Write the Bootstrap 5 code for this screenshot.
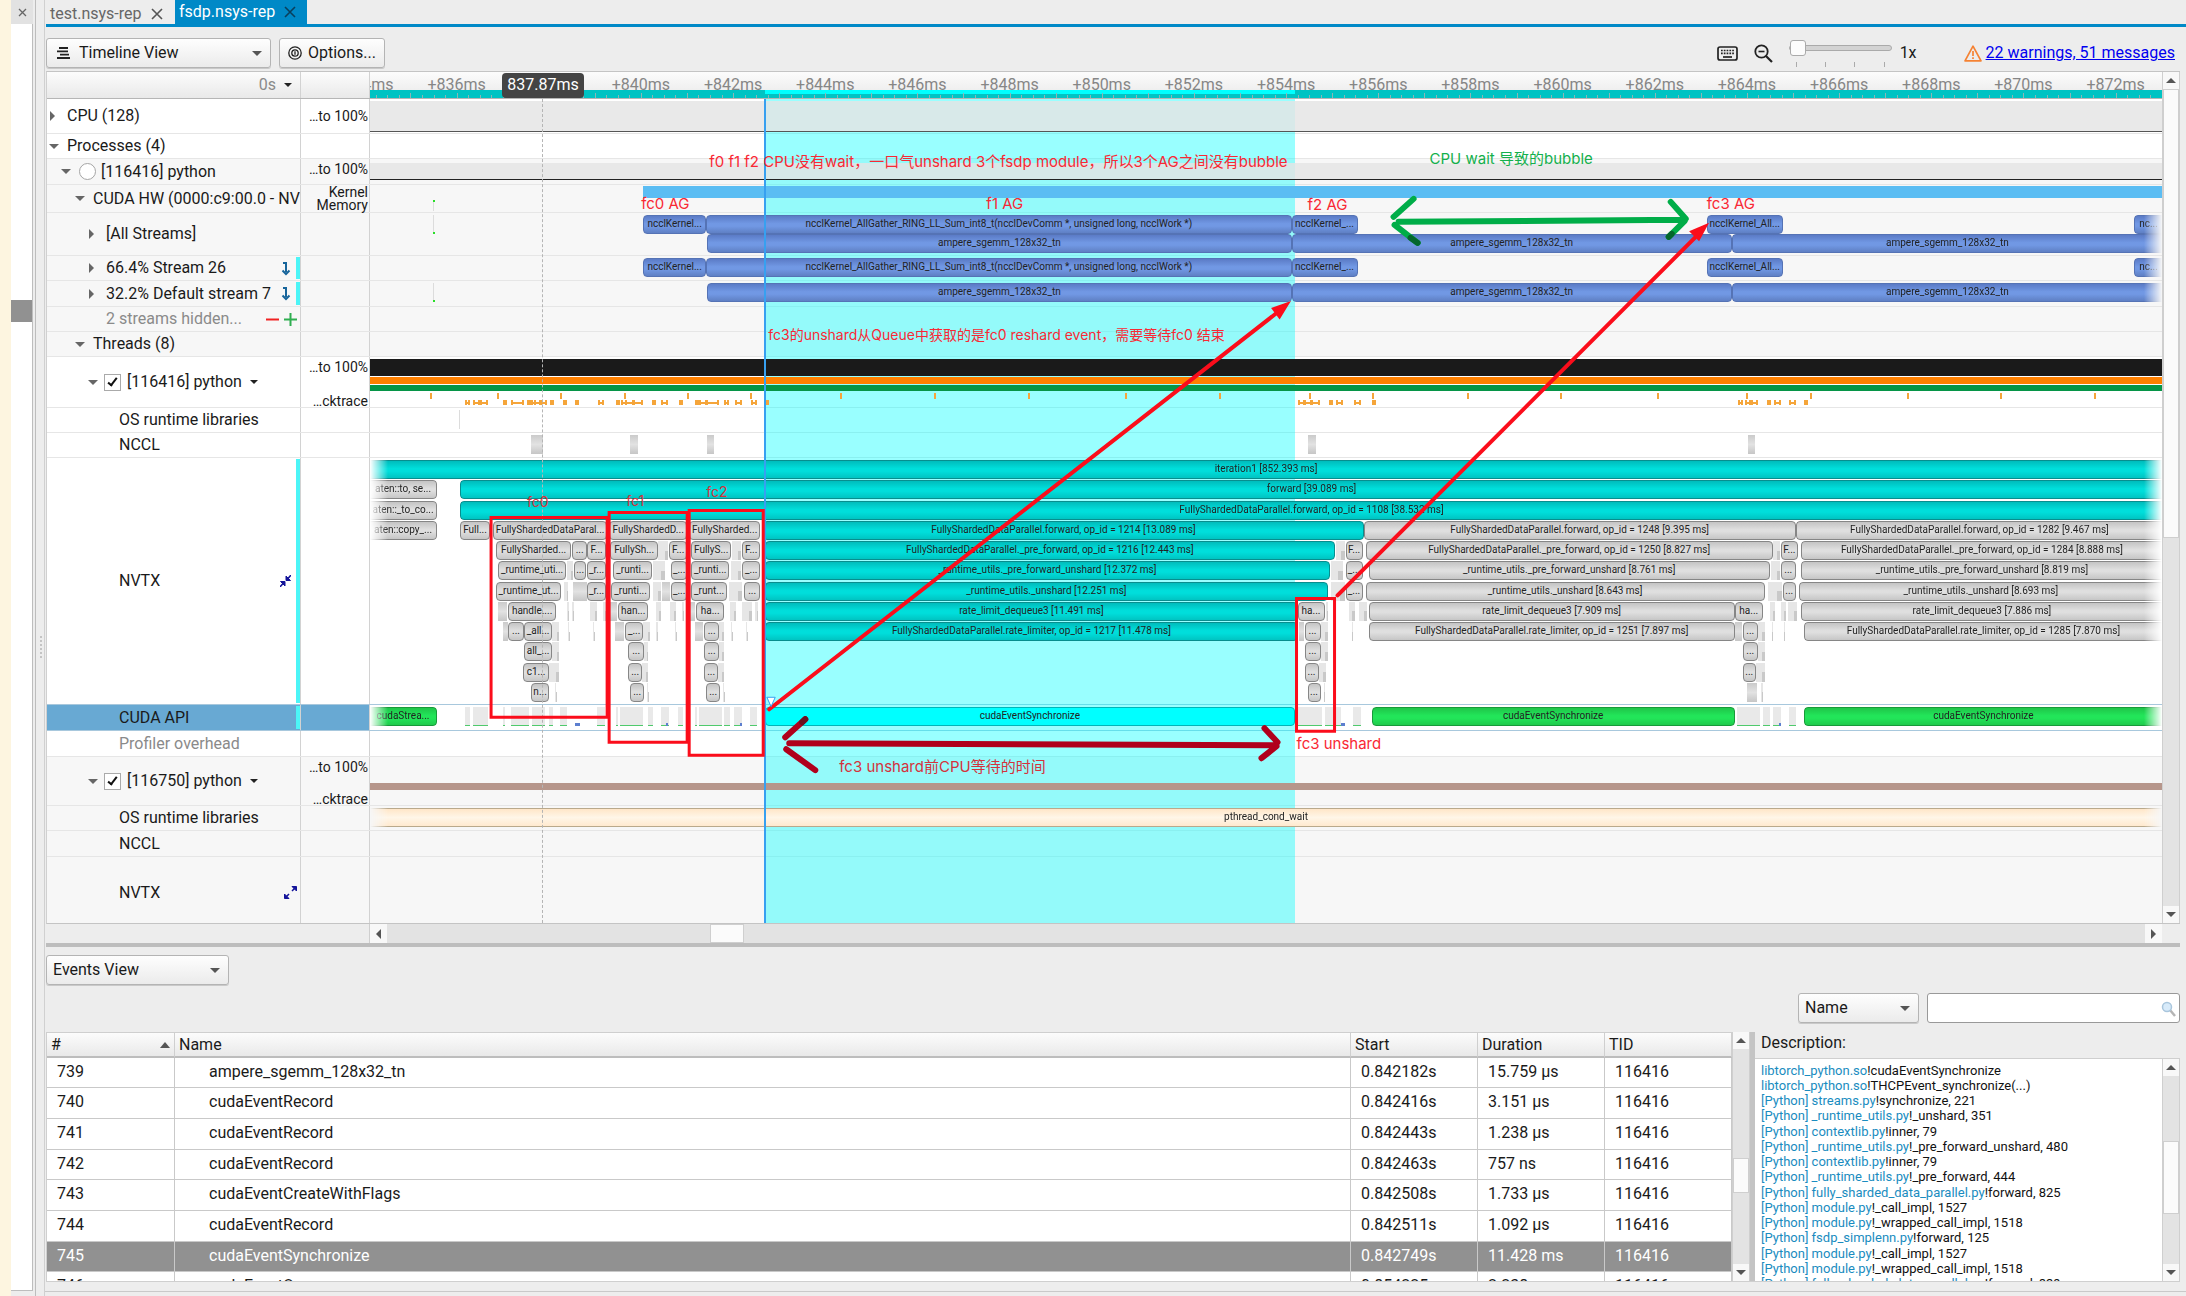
<!DOCTYPE html>
<html lang="zh-CN">
<head>
<meta charset="utf-8">
<meta name="viewport" content="width=device-width, initial-scale=1">
<title>fsdp.nsys-rep</title>
<link href="https://cdn.jsdelivr.net/npm/bootstrap@5.3.0/dist/css/bootstrap.min.css" rel="stylesheet">
<style>
  body { font-family: Roboto, "Noto Sans CJK SC", sans-serif; font-size: 16px; line-height: 20px; color: #1a1a1a; background: #ededed; }
  .edge-strip { width: 11px; background: #fdf5e0; }
  .side-pane { width: 25px; border-right: 1px solid #bdbdbd; padding-right: 2px; padding-bottom: 5px; }
  .side-tab { height: 24px; background: #e2e2e2; }
  .side-body { background: #fff; border-right: 1px solid #bdbdbd; border-bottom: 1px solid #bdbdbd; }
  .side-thumb { height: 22px; margin-top: 276px; background: #919191; }
  .gutter { width: 9px; border-right: 1px solid #d0d0d0; }
  .gutter i { width: 2px; height: 2px; background: #c4c4c4; margin: 0 3px 2px 4px; }
  .workspace { min-width: 0; padding: 0 6px 0 1px; }
  .doc-tabs { height: 27px; border-bottom: 3px solid #0089c7; margin-right: -6px; }
  .doc-tab { border: 0; background: none; padding: 0 0 0 4px; color: #666; height: 24px; gap: 9px; white-space: nowrap; line-height: 24px; }
  .doc-tab.first { width: 129px; padding-top: 4px; }
  .doc-tab.now { width: 132px; background: #0089c7; color: #fff; }
  .toolbar-row { padding: 11px 0 3px; }
  .toolbar-right { padding-right: 5px; }
  .ui-box { height: 30px; border: 1px solid #b4b4b4; border-radius: 3px; background: linear-gradient(#fefefe, #ebebeb); color: #1a1a1a; box-shadow: 0 1px 0 #c9c9c9; }
  .pick { position: relative; }
  .pick select { display: block; appearance: none; width: 100%; padding: 0 24px 0 6px; }
  .pick::after { content: ""; position: absolute; right: 9px; top: 13px; border: 5px solid transparent; border-top-color: #555; border-bottom: 0; pointer-events: none; }
  .pick svg { position: absolute; left: 11px; top: 9px; }
  .pick.lead-icon { width: 225px; }
  .pick.lead-icon select { padding-left: 32px; }
  .pick.lower-view { width: 183px; }
  .pick.by-name { width: 121px; }
  .opt-btn { gap: 6px; }
  .zoomer { appearance: none; width: 103px; height: 16px; background: none; margin: 0; }
  .zoomer::-webkit-slider-runnable-track { height: 6px; border: 1px solid #aaa; border-radius: 3px; background: #d3d3d3; }
  .zoomer::-webkit-slider-thumb { appearance: none; width: 16px; height: 16px; margin-top: -6px; border: 1px solid #aaa; border-radius: 3px; background: #fcfcfc; }
  .zoom-ticks { padding: 0 7px; margin-top: 6px; height: 5px; }
  .zoom-ticks i { width: 1px; background: #aaa; }
  .warn-ico { margin-left: 47px; }
  .msg-link { color: #0000f0; text-decoration: underline; }

  .timeline { border-top: 1px solid #c4c4c4; border-left: 1px solid #d0d0d0; border-bottom: 1px solid #c4c4c4; }
  .tracks { min-width: 0; }
  .ruler-row, .track { display: flex; }
  .ruler-row { height: 27px; border-bottom: 1px solid #b6b6b6; background: linear-gradient(#fcfcfc, #e9e9e9); }
  .cell-name { width: 254px; flex: none; border-right: 1px solid #d2d2d2; position: relative; overflow: hidden; white-space: nowrap; display: flex; align-items: center; }
  .cell-unit { width: 69px; flex: none; border-right: 1px solid #d2d2d2; font-size: 14px; line-height: 13px; text-align: right; padding-right: 1px; display: flex; flex-direction: column; justify-content: center; }
  .cell-unit.spread { justify-content: space-between; padding-top: 4px; }
  .cell-unit.spread span:last-child { margin-bottom: -1px; }
  .cell-unit.high { padding-bottom: 5px; }
  .cell-lane { flex: 1; min-width: 0; position: relative; overflow: hidden; }
  .track { border-bottom: 1px solid #e6e6e6; background: #fff; }
  .track.dim { background: #f7f7f7; }
  .h25 { height: 25px; } .h26 { height: 26px; } .h28 { height: 28px; } .h35 { height: 35px; } .h43 { height: 43px; }
  .h49 { height: 49px; } .h51 { height: 51px; } .h66 { height: 66px; } .h247 { height: 247px; }
  .h66 .cell-name { padding-top: 5px; }
  .in0 { padding-left: 20px; } .in1 { padding-left: 32px; } .in2 { padding-left: 46px; } .in3 { padding-left: 59px; } .in4 { padding-left: 72px; }
  .faint { color: #8a8a8a; }
  .tri { width: 0; height: 0; flex: none; border: 4px solid transparent; }
  .tri.down { border-width: 5px 5px 0; border-top-color: #666; margin: 0 8px 0 -18px; }
  .tri.right { border-width: 5px 0 5px 5px; border-left-color: #666; margin: 0 12px 0 -17px; }
  .tri.near { margin-right: 6px; }
  .tri.mini { border-width: 4px 4px 0; border-top-color: #222; margin-left: 8px; }
  .tri.asc { border-width: 0 5px 6px; border-bottom-color: #555; }
  .round-box { width: 17px; height: 17px; border: 1px solid #a5a5a5; border-radius: 50%; background: #fff; margin: 0 5px 0 0; appearance: none; }
  .tick-box { appearance: none; width: 17px; height: 17px; margin: 0 6px 0 0; border: 1px solid #aaa; background: #fff; position: relative; }
  .tick-box::after { content: ""; position: absolute; left: 5px; top: 1px; width: 5px; height: 10px; border: solid #111; border-width: 0 2px 2px 0; transform: rotate(38deg); }
  .sel-mark::after { content: ""; position: absolute; right: 0; top: 1px; bottom: 1px; width: 4px; background: #4cf5f7; }
  .row-ico { position: absolute; right: 9px; }
  .row-ico.edge { right: 3px; }
  .track.picked .cell-name, .track.picked .cell-unit { background: #68a9d3; }
  .track.picked { border-bottom-color: #a8c8dd; box-shadow: 0 -1px 0 #a8c8dd; }

  .tick-lbl { position: absolute; top: 3px; width: 80px; margin-left: -40px; text-align: center; color: #868686; }
  .ruler-strip { position: absolute; left: 0; right: 0; bottom: 0; height: 8px; background: #00c3c3; }
  .ruler-strip i { position: absolute; bottom: 0; width: 1px; height: 3px; background: #8fb5b5; }
  .ruler-strip i.major { height: 5px; }
  .ruler-strip b { position: absolute; top: 0; height: 4px; background: #00ffff; }
  .time-tip { position: absolute; top: 1px; width: 82px; height: 25px; margin-left: -41px; border-radius: 4px; background: #444; color: #fff; text-align: center; line-height: 24px; z-index: 4; }

  .lane-stack { display: flex; flex-direction: column; justify-content: space-between; height: 100%; padding: 2px 0; }
  .lane { position: relative; height: 19px; z-index: 2; }
  .ev { position: absolute; top: 0; height: 19px; border: 1px solid #868686; border-radius: 4px; background: linear-gradient(#c4c4c4, #dfdfdf 45%, #dfdfdf 55%, #c6c6c6); font-size: 10px; line-height: 15px; color: #222; text-align: center; white-space: nowrap; overflow: hidden; }
  .ev.teal { border-color: #078e8e; background: linear-gradient(#00bcbc, #00dedb 45%, #00dedb 60%, #00c4c2); }
  .ev.blue { border-color: #5573b5; background: linear-gradient(#5b7bc6, #7198e4 45%, #7198e4 60%, #5f80c4); }
  .ev.green { border-color: #189a3a; background: linear-gradient(#1fc549, #22e559 45%, #22e559 60%, #20cb4c); }
  .ev.cyan { border-color: #00b5b8; background: #00ffff; }
  .ev.cream { border-color: #b9a98c; border-width: 1px 0; background: linear-gradient(#ffe6c8, #fff6e8 50%, #ffe9cf); }
  .ev.fade-l { -webkit-mask-image: linear-gradient(90deg, transparent, #000 18px); border-left: 0; border-radius: 0 4px 4px 0; }
  .ev.fade-r { -webkit-mask-image: linear-gradient(270deg, transparent, #000 18px); border-right: 0; border-radius: 4px 0 0 4px; }
  .ev.fade-l.fade-r { -webkit-mask-image: linear-gradient(90deg, transparent, #000 18px, #000 calc(100% - 18px), transparent); border-radius: 0; }
  .blk { position: absolute; top: 0; height: 19px; background: #e6e6e6; }
  .blk.mid { background: linear-gradient(#cbcbcb, #e2e2e2 50%, #c6c6c6); }
  .blk.part::after { content: ""; position: absolute; right: 0; bottom: 0; width: 35%; height: 50%; background: #c9c9c9; }
  .blk.api { background: #e9e9e9; border-bottom: 1px solid #4fca6c; }
  .blk.api-b { top: 16px; height: 3px; background: #5d7fcf; }
  .load { position: absolute; left: 0; right: 0; z-index: 2; }
  .load.cpu { top: 2px; height: 31px; background: rgba(228,228,228,.83); border-bottom: 1px solid #555; }
  .load.proc { top: 4px; height: 17px; background: rgba(228,228,228,.83); border-bottom: 1px solid #222; }
  .kern-bar { position: absolute; top: 1px; height: 12px; background: #5bbdf3; z-index: 2; }
  .st-black { top: 2px; height: 17px; background: #1a1a1a; }
  .st-orange { top: 20px; height: 7px; background: #ff8000; }
  .st-green { top: 28px; height: 6px; background: #069547; }
  .st-brown { top: 26px; height: 7px; background: #b6968b; }
  .smp { position: absolute; top: 36px; width: 2px; height: 6px; background: #f5a53a; z-index: 2; }
  .seg { position: absolute; top: 43px; height: 5px; border: solid #f5a53a; border-width: 0 2px; background: linear-gradient(transparent 2px, #f5a53a 2px, #f5a53a 4px, transparent 4px); z-index: 2; }
  .fleck { position: absolute; width: 1px; background: #dcdcdc; z-index: 2; }
  .fleck.long { top: 2px; height: 19px; }
  .fleck.short { top: 15px; height: 11px; }
  .fleck.g::after { content: ""; position: absolute; left: 0; bottom: 0; width: 2px; height: 2px; background: #2ade2a; }
  .fleck.gt::after { bottom: auto; top: 0; }

  .over { position: absolute; top: 27px; right: 0; bottom: 0; left: 323px; pointer-events: none; }
  .band { position: absolute; top: 0; bottom: 0; background: rgba(0,255,255,.4); z-index: 1; }
  .cursor-line { position: absolute; top: 0; bottom: 0; border-left: 2px solid #37a0f0; z-index: 3; }
  .hover-line { position: absolute; top: 0; bottom: 0; border-left: 1px dashed #b5b5b5; z-index: 3; }
  .ink { position: absolute; inset: 0; width: 100%; height: 100%; z-index: 6; }
  .ink * { vector-effect: non-scaling-stroke; fill: none; stroke-linecap: round; }
  .ink .tip { fill: #fb0d1b; }
  .ink .flag { fill: #fff; }
  .note { position: absolute; z-index: 7; font: 15px/20px Inter, "Noto Sans CJK SC", sans-serif; color: #f92834; white-space: nowrap; }
  .note.go { color: #14b04c; }
  .note.deep { color: #d5323c; }
  .note.tight { font-size: 14px; }

  .sb { background: #e3e3e3; border: 1px solid #cfcfcf; }
  .sb-v { width: 18px; flex: none; border-top: 0; border-bottom: 0; display: flex; flex-direction: column; }
  .sb-h { height: 19px; display: flex; margin: 0 18px 0 323px; border-width: 0 0 0 1px; }
  .sb-btn { flex: none; display: flex; align-items: center; justify-content: center; background: #f8f8f8; }
  .sb-v .sb-btn { height: 17px; } .sb-h .sb-btn { width: 17px; }
  .sb-thumb { flex: none; background: #fbfbfb; border: 1px solid #cfcfcf; }
  .sb-btn i { border: 5px solid transparent; }
  .sb-btn .up { border-bottom-color: #555; border-top: 0; } .sb-btn .dn { border-top-color: #555; border-bottom: 0; }
  .sb-btn .lf { border-right-color: #555; border-left: 0; } .sb-btn .rt { border-left-color: #555; border-right: 0; }
  .splitter { height: 4px; background: #bdbdbd; }

  .search-box { display: block; width: 253px; height: 30px; border: 1px solid #999; border-radius: 3px; background: #fff; padding: 0 24px 0 6px; }
  .lower { min-height: 0; margin-top: 9px; border-bottom: 1px solid #cfcfcf; }
  .grid-wrap { min-width: 0; overflow: hidden; border-top: 1px solid #cfcfcf; border-left: 1px solid #cfcfcf; background: #fff; }
  .ev-table { width: 100%; table-layout: fixed; border-collapse: separate; border-spacing: 0; }
  .ev-table th { height: 25px; font-weight: 400; padding: 1px 4px 0; border-right: 1px solid #cfcfcf; border-bottom: 2px solid #bdbdbd; background: linear-gradient(#fcfcfc, #e9e9e9); }
  .ev-table td { height: 31px; padding: 0 10px 2px; border-right: 1px solid #c9c9c9; border-bottom: 1px solid #c9c9c9; white-space: nowrap; }
  .ev-table tbody tr:nth-child(3n+1) td { height: 30px; }
  .ev-table td:nth-child(2) { padding-left: 34px; }
  .ev-table .chosen td { background: #919191; color: #fff; }
  .ev-table col.c-id { width: 128px; } .ev-table col.c-n { width: 127px; }
  .v-split { width: 5px; background: #c4c4c4; }
  .desc-pane { width: 425px; }
  .desc-title { height: 27px; padding-left: 6px; line-height: 21px; }
  .desc-box { min-height: 0; border-top: 1px solid #cfcfcf; background: #fff; }
  .stack { font-size: 13px; line-height: 15px; padding: 4px 0 0 6px; margin: 0; overflow: hidden; white-space: nowrap; list-style: none; color: #111; }
  .stack li:nth-child(4n) { margin-bottom: 1px; }
  .stack span { color: #1a8cc0; }
  .foot { height: 14px; padding-top: 9px; margin: 0 -6px 0 -1px; }
  .foot div { border-top: 1px solid #c9c9c9; }
</style>
</head>
<body class="d-flex vh-100 overflow-hidden">
  <div class="edge-strip flex-shrink-0"></div>
  <aside class="side-pane d-flex flex-column flex-shrink-0">
    <div class="side-tab d-flex align-items-center justify-content-center">
      <svg width="9" height="9" viewBox="0 0 9 9" stroke="#666" stroke-width="1.3"><path d="M1 1l7 7M8 1l-7 7"/></svg>
    </div>
    <div class="side-body flex-grow-1"><div class="side-thumb"></div></div>
  </aside>
  <div class="gutter flex-shrink-0 d-flex flex-column justify-content-center"><i></i><i></i><i></i><i></i><i></i><i></i></div>

  <main class="workspace flex-grow-1 d-flex flex-column">
    <nav class="doc-tabs d-flex flex-shrink-0">
      <button class="doc-tab first d-flex align-items-center">test.nsys-rep
        <svg width="12" height="12" viewBox="0 0 12 12" stroke="#555" stroke-width="1.6"><path d="M1 1l10 10M11 1L1 11"/></svg></button>
      <button class="doc-tab now d-flex align-items-center">fsdp.nsys-rep
        <svg width="12" height="12" viewBox="0 0 12 12" stroke="#0a3f5c" stroke-width="1.6"><path d="M1 1l10 10M11 1L1 11"/></svg></button>
    </nav>

    <div class="toolbar-row d-flex flex-shrink-0">
      <div class="pick lead-icon">
        <svg width="13" height="12" viewBox="0 0 13 12" stroke="#222" stroke-width="1.8"><path d="M2 1h9M0 4.300h11M3 7.600h9M0 11h13"/></svg>
        <select class="ui-box" aria-label="View"><option>Timeline View</option></select>
      </div>
      <button class="ui-box opt-btn ms-2 px-2 d-flex align-items-center text-nowrap">
        <svg width="14" height="14" viewBox="0 0 14 14" fill="none" stroke="#222"><circle cx="7" cy="7" r="6.200" stroke-width="1.300"/><circle cx="7" cy="7" r="3.200" stroke-width="1.300"/><path d="M7 5.200v3.600" stroke-width="1.300"/></svg>
        Options...</button>
      <div class="toolbar-right ms-auto d-flex align-items-center">
        <svg width="21" height="15" viewBox="0 0 21 15" fill="none" stroke="#222"><rect x="1" y="1" width="19" height="13" rx="2" stroke-width="1.700"/><path d="M4 4.500h13M4 7.300h13" stroke-width="1.700" stroke-dasharray="1.700 1.100"/><path d="M6 11h9" stroke-width="1.700"/></svg>
        <svg class="ms-3" width="19" height="19" viewBox="0 0 19 19" fill="none" stroke="#222"><circle cx="7.500" cy="7.500" r="6.200" stroke-width="1.800"/><path d="M4.500 7.500h6" stroke-width="1.600"/><path d="M12 12l6 6" stroke-width="2.200"/></svg>
        <div class="ms-3 d-flex flex-column"><input class="zoomer" type="range" min="0" max="3" value="0" aria-label="Zoom"><div class="zoom-ticks d-flex justify-content-between"><i></i><i></i><i></i><i></i></div></div>
        <span class="ms-2">1x</span>
        <svg class="warn-ico" width="18" height="17" viewBox="0 0 18 17" fill="none" stroke="#f58233"><path d="M9 1.200L17 15.800H1z" stroke-width="1.700" stroke-linejoin="round"/><path d="M9 6v5M9 12.200v1.800" stroke-width="1.700"/></svg>
        <a class="msg-link ms-1" href="#">22 warnings, 51 messages</a>
      </div>
    </div>

    <section class="timeline d-flex flex-shrink-0">
      <div class="tracks flex-grow-1 position-relative">
        <div class="ruler-row">
          <div class="cell-name faint justify-content-end pe-1">0s<i class="tri mini me-1"></i></div>
          <div class="cell-unit"></div>
          <div class="cell-lane" id="ruler"><div class="ruler-strip" id="strip"></div></div>
        </div>
        <div class="track h35"><div class="cell-name in0"><i class="tri right"></i>CPU (128)</div><div class="cell-unit">…to 100%</div><div class="cell-lane"><div class="load cpu"></div></div></div>
        <div class="track h25"><div class="cell-name in0"><i class="tri down"></i>Processes (4)</div><div class="cell-unit"></div><div class="cell-lane"></div></div>
        <div class="track dim h26"><div class="cell-name in1"><i class="tri down"></i><input class="round-box" type="checkbox" id="p1"><label for="p1">[116416] python</label></div><div class="cell-unit high">…to 100%</div><div class="cell-lane"><div class="load proc"></div></div></div>
        <div class="track dim h28"><div class="cell-name in2"><i class="tri down"></i>CUDA HW (0000:c9:00.0 - NV</div><div class="cell-unit">Kernel<br>Memory</div><div class="cell-lane" id="hw"></div></div>
        <div class="track dim h43"><div class="cell-name in3"><i class="tri right"></i>[All Streams]</div><div class="cell-unit"></div><div class="cell-lane"><div class="lane-stack" data-lanes="nccl gemm"></div></div></div>
        <div class="track dim h25"><div class="cell-name in3 sel-mark"><i class="tri right"></i>66.4% Stream 26<svg class="row-ico" width="10" height="15" viewBox="0 0 10 15" fill="none" stroke="#17659b" stroke-width="2"><path d="M2 2h3v9M1.500 9.500L5 13l3.500-3.500"/></svg></div><div class="cell-unit"></div><div class="cell-lane"><div class="lane-stack" data-lanes="nccl"></div></div></div>
        <div class="track dim h26"><div class="cell-name in3 sel-mark"><i class="tri right"></i>32.2% Default stream 7<svg class="row-ico" width="10" height="15" viewBox="0 0 10 15" fill="none" stroke="#17659b" stroke-width="2"><path d="M2 2h3v9M1.500 9.500L5 13l3.500-3.500"/></svg></div><div class="cell-unit"></div><div class="cell-lane"><div class="lane-stack" data-lanes="gemm"></div></div></div>
        <div class="track dim h25"><div class="cell-name in3 faint">2 streams hidden...<svg class="row-ico edge" width="31" height="13" viewBox="0 0 31 13" stroke-width="2"><path d="M0 6.500h13" stroke="#f02222"/><path d="M18 6.500h13M24.500 0v13" stroke="#2fae50"/></svg></div><div class="cell-unit"></div><div class="cell-lane"></div></div>
        <div class="track dim h25"><div class="cell-name in2"><i class="tri down"></i>Threads (8)</div><div class="cell-unit"></div><div class="cell-lane"></div></div>
        <div class="track h51"><div class="cell-name in3"><i class="tri down near"></i><input class="tick-box" type="checkbox" id="t1" checked><label for="t1">[116416] python</label><i class="tri mini"></i></div><div class="cell-unit spread"><span>…to 100%</span><span>…cktrace</span></div><div class="cell-lane" id="thr"><div class="load st-black"></div><div class="load st-orange"></div><div class="load st-green"></div></div></div>
        <div class="track h25"><div class="cell-name in4">OS runtime libraries</div><div class="cell-unit"></div><div class="cell-lane" id="osr"></div></div>
        <div class="track h25"><div class="cell-name in4">NCCL</div><div class="cell-unit"></div><div class="cell-lane"><div class="lane-stack" data-lanes="ncclApi"></div></div></div>
        <div class="track h247"><div class="cell-name in4 sel-mark">NVTX<svg class="row-ico" width="11" height="12" viewBox="0 0 11 12" fill="#14149a" stroke="#14149a"><path d="M6 5.500V1l4.500 4.500zM5 6.500V11L.5 6.500z"/><path d="M7.500 4L11 0M3.500 8L0 12" stroke-width="1.500"/></svg></div><div class="cell-unit"></div><div class="cell-lane"><div class="lane-stack" data-lanes="n0 n1 n2 n3 n4 n5 n6 n7 n8 n9 n10 n11"></div></div></div>
        <div class="track picked h26"><div class="cell-name in4 sel-mark">CUDA API</div><div class="cell-unit"></div><div class="cell-lane"><div class="lane-stack" data-lanes="api"></div></div></div>
        <div class="track h26"><div class="cell-name in4 faint">Profiler overhead</div><div class="cell-unit"></div><div class="cell-lane"></div></div>
        <div class="track dim h49"><div class="cell-name in3"><i class="tri down near"></i><input class="tick-box" type="checkbox" id="t2" checked><label for="t2">[116750] python</label><i class="tri mini"></i></div><div class="cell-unit spread"><span>…to 100%</span><span>…cktrace</span></div><div class="cell-lane"><div class="load st-brown"></div></div></div>
        <div class="track dim h25"><div class="cell-name in4">OS runtime libraries</div><div class="cell-unit"></div><div class="cell-lane"><div class="lane-stack" data-lanes="os2"></div></div></div>
        <div class="track dim h26"><div class="cell-name in4">NCCL</div><div class="cell-unit"></div><div class="cell-lane"></div></div>
        <div class="track dim h66 border-bottom-0"><div class="cell-name in4">NVTX<svg class="row-ico edge" width="13" height="13" viewBox="0 0 13 13" fill="#14149a" stroke="#14149a"><path d="M8 .5h4.500V5zM.5 8v4.500H5z"/><path d="M10.500 2.500L8 5M2.500 10.500L5 8" stroke-width="1.500"/></svg></div><div class="cell-unit"></div><div class="cell-lane"></div></div>

        <div class="over" id="over">
          <svg class="ink" viewBox="0 0 1791 825" preserveAspectRatio="none">
            <g stroke="#fb0d1b" stroke-width="3">
              <path d="M121 419h116v200H121z"/><path d="M239 414h78v230h-78z"/><path d="M319 412h74v245h-74z"/><path d="M926 500h38v133h-38z"/>
              <path d="M399 611L909 212" stroke-width="4"/><path d="M967 497L1329 134" stroke-width="4"/>
              <path class="tip" d="M917 205l-8 13-6-8z"/><path class="tip" d="M1335 127l-7 13-7-7z"/>
            </g>
            <path class="flag" d="M397 599h8l-4 9z" stroke="#37a0f0"/>
            <g stroke="#00ad48" stroke-width="6"><path d="M1028 123L1313 121M1023 118l20-18M1024 126l23 18M1300 103l15 17M1314 122l-16 16"/><path d="M1040 139l7 5M1301 135l-3 3" stroke="#04662c"/></g>
            <g stroke="#b0001c" stroke-width="6"><path d="M419 645L906 647M415 639l20-18M416 651l29 21M894 630l13 14M906 648l-15 12"/><path d="M432 624l3-3" stroke="#6a1020"/></g>
          </svg>
        </div>
      </div>
      <div class="sb sb-v" aria-hidden="true"><div class="sb-btn"><i class="up"></i></div><div class="sb-thumb" style="height:449px"></div><div class="flex-grow-1"></div><div class="sb-btn"><i class="dn"></i></div></div>
    </section>
    <div class="sb sb-h flex-shrink-0" aria-hidden="true"><div class="sb-btn"><i class="lf"></i></div><div style="width:18%"></div><div class="sb-thumb" style="width:34px"></div><div class="flex-grow-1"></div><div class="sb-btn"><i class="rt"></i></div></div>
    <div class="splitter flex-shrink-0"></div>

    <div class="mt-2 flex-shrink-0"><div class="pick lower-view"><select class="ui-box" aria-label="Lower view"><option>Events View</option></select></div></div>
    <div class="mt-2 d-flex justify-content-end gap-2 flex-shrink-0">
      <div class="pick by-name"><select class="ui-box" aria-label="Search column"><option>Name</option></select></div>
      <div class="position-relative"><input class="search-box" type="text" aria-label="Search"><svg class="position-absolute end-0 top-0 mt-2 me-1" width="15" height="16" viewBox="0 0 15 16" fill="none"><path d="M9 9l5 6" stroke="#b5b5b5" stroke-width="2.500"/><circle cx="6" cy="6" r="4.500" fill="#d8ebfa" stroke="#a9c6dd" stroke-width="1.500"/></svg></div>
    </div>

    <section class="lower d-flex flex-grow-1">
      <div class="grid-wrap flex-grow-1">
        <table class="ev-table">
          <colgroup><col class="c-id"><col><col class="c-n"><col class="c-n"><col class="c-n"></colgroup>
          <thead><tr><th><div class="d-flex align-items-center justify-content-between">#<i class="tri asc"></i></div></th><th>Name</th><th>Start</th><th>Duration</th><th>TID</th></tr></thead>
          <tbody>
            <tr><td>739</td><td>ampere_sgemm_128x32_tn</td><td>0.842182s</td><td>15.759 μs</td><td>116416</td></tr>
            <tr><td>740</td><td>cudaEventRecord</td><td>0.842416s</td><td>3.151 μs</td><td>116416</td></tr>
            <tr><td>741</td><td>cudaEventRecord</td><td>0.842443s</td><td>1.238 μs</td><td>116416</td></tr>
            <tr><td>742</td><td>cudaEventRecord</td><td>0.842463s</td><td>757 ns</td><td>116416</td></tr>
            <tr><td>743</td><td>cudaEventCreateWithFlags</td><td>0.842508s</td><td>1.733 μs</td><td>116416</td></tr>
            <tr><td>744</td><td>cudaEventRecord</td><td>0.842511s</td><td>1.092 μs</td><td>116416</td></tr>
            <tr class="chosen"><td>745</td><td>cudaEventSynchronize</td><td>0.842749s</td><td>11.428 ms</td><td>116416</td></tr>
            <tr><td>746</td><td>cudaEventQuery</td><td>0.854225s</td><td>2.238 μs</td><td>116416</td></tr>
          </tbody>
        </table>
      </div>
      <div class="sb sb-v" aria-hidden="true"><div class="sb-btn"><i class="up"></i></div><div style="height:109px"></div><div class="sb-thumb" style="height:35px"></div><div class="flex-grow-1"></div><div class="sb-btn"><i class="dn"></i></div></div>
      <div class="v-split flex-shrink-0"></div>
      <div class="desc-pane flex-shrink-0 d-flex flex-column">
        <div class="desc-title">Description:</div>
        <div class="desc-box d-flex flex-grow-1">
          <ul class="stack flex-grow-1">
            <li><span>libtorch_python.so</span>!cudaEventSynchronize</li>
            <li><span>libtorch_python.so</span>!THCPEvent_synchronize(...)</li>
            <li><span>[Python] streams.py</span>!synchronize, 221</li>
            <li><span>[Python] _runtime_utils.py</span>!_unshard, 351</li>
            <li><span>[Python] contextlib.py</span>!inner, 79</li>
            <li><span>[Python] _runtime_utils.py</span>!_pre_forward_unshard, 480</li>
            <li><span>[Python] contextlib.py</span>!inner, 79</li>
            <li><span>[Python] _runtime_utils.py</span>!_pre_forward, 444</li>
            <li><span>[Python] fully_sharded_data_parallel.py</span>!forward, 825</li>
            <li><span>[Python] module.py</span>!_call_impl, 1527</li>
            <li><span>[Python] module.py</span>!_wrapped_call_impl, 1518</li>
            <li><span>[Python] fsdp_simplenn.py</span>!forward, 125</li>
            <li><span>[Python] module.py</span>!_call_impl, 1527</li>
            <li><span>[Python] module.py</span>!_wrapped_call_impl, 1518</li>
            <li><span>[Python] fully_sharded_data_parallel.py</span>!forward, 839</li>
          </ul>
          <div class="sb sb-v" aria-hidden="true"><div class="sb-btn"><i class="up"></i></div><div style="height:65px"></div><div class="sb-thumb" style="height:73px"></div><div class="flex-grow-1"></div><div class="sb-btn"><i class="dn"></i></div></div>
        </div>
      </div>
    </section>
    <div class="foot flex-shrink-0"><div></div></div>
  </main>

<script src="https://cdn.jsdelivr.net/npm/bootstrap@5.3.0/dist/js/bootstrap.bundle.min.js"></script>
<script>
// The visible time range is SPAN units wide, beginning at unit START.
const START = 370, END = 2161, SPAN = END - START;
const pct = v => (v / SPAN * 100) + '%';
function put(host, cls, from, to, text) {
  const el = document.createElement('div');
  el.className = cls;
  el.style.left = pct(from - START);
  if (to != null) el.style.width = pct(to - from);
  if (text) el.textContent = text;
  host.appendChild(el);
  return el;
}
// Lane entries: [from, to, label, classes]; entries with no label are collapsed blocks.
const F = 'FullyShardedDataParallel.', R = '_runtime_utils._', Q = 'rate_limit_dequeue3 ';
const T = 'teal', fr = ' fade-r', fl = ' fade-l';
const nccl = [[643,706,'ncclKernel...','blue'],[706,1291,'ncclKernel_AllGather_RING_LL_Sum_int8_t(ncclDevComm *, unsigned long, ncclWork *)','blue'],[1291,1357,'ncclKernel_...','blue'],[1706,1782,'ncclKernel_All...','blue'],[2133,2161,'nc...','blue'+fr]];
const gemm = [[707,1291,'ampere_sgemm_128x32_tn','blue'],[1291,1731,'ampere_sgemm_128x32_tn','blue'],[1731,2161,'ampere_sgemm_128x32_tn','blue'+fr]];
const b = (...p) => p.map(([x, y]) => [x, y, '', 'part']);
const m = (...p) => p.map(([x, y]) => [x, y, '', 'mid']);
const LANES = {
  nccl, gemm,
  ncclApi: m([531,543],[630,638],[707,714],[1307,1315],[1747,1754]),
  n0: [[370,2161,'iteration1 [852.393 ms]',T+fl+fr]],
  n1: [[370,437,'aten::to, se...',fl],[460,2161,'forward [39.089 ms]',T+fr]],
  n2: [[370,437,'aten::_to_co...',fl],[460,2161,F+'forward, op_id = 1108 [38.532 ms]',T+fr]],
  n3: [[370,437,'aten::copy_...',fl],[460,490,'Full...'],[493,607,'FullyShardedDataParal...'],[609,687,'FullyShardedD...'],[689,760,'FullySharded...'],[763,1363,F+'forward, op_id = 1214 [13.089 ms]',T],[1363,1795,F+'forward, op_id = 1248 [9.395 ms]'],[1795,2161,F+'forward, op_id = 1282 [9.467 ms]',fr]],
  n4: [[496,571,'FullySharded...'],[572,587,'...'],[587,606,'F...'],[610,658,'FullySh...'],...b([658,668]),[669,687,'F...'],[691,731,'FullyS...'],...b([732,741]),[742,760,'F...'],[765,1334,F+'_pre_forward, op_id = 1216 [12.443 ms]',T],...b([1335,1344]),[1345,1362,'F...'],[1365,1772,F+'_pre_forward, op_id = 1250 [8.827 ms]'],...b([1772,1779]),[1780,1797,'F...'],[1800,2161,F+'_pre_forward, op_id = 1284 [8.888 ms]',fr]],
  n5: [[498,566,'_runtime_uti...'],...b([567,573]),[574,586,'...'],[587,606,'_r...'],[613,652,'_runti...'],...b([653,665]),[671,687,'_...'],[691,729,'_runti...'],...b([731,741]),[742,760,'_...'],[765,1329,R+'pre_forward_unshard [12.372 ms]',T],...b([1330,1342]),[1345,1362,'_...'],[1368,1769,R+'pre_forward_unshard [8.761 ms]'],...b([1770,1779]),[1780,1795,'...'],[1800,2161,R+'pre_forward_unshard [8.819 ms]',fr]],
  n6: [[496,561,'_runtime_ut...'],...b([564,568]),...m([573,587]),[587,606,'_r...'],[611,650,'_runti...'],...b([653,661]),...m([662,670]),[671,687,'_...'],[691,727,'_runt...'],...b([729,742]),[744,760,'...'],[765,1327,R+'unshard [12.251 ms]',T],...b([1330,1344]),[1345,1362,'_...'],[1365,1764,R+'unshard [8.643 ms]'],...b([1767,1781]),[1782,1795,'...'],[1798,2161,R+'unshard [8.693 ms]',fr]],
  n7: [...m([498,507]),[508,556,'handle....'],...b([567,569],[572,574],[590,597],[603,606]),...m([610,617]),[618,648,'han...'],...b([656,661],[670,676],[682,684]),...m([690,695]),[696,724,'ha...'],...b([730,736],[742,752],[755,758]),[765,1297,Q+'[11.491 ms]',T],[1297,1324,'ha...'],...b([1325,1327],[1348,1354],[1358,1366]),[1368,1734,Q+'[7.909 ms]'],[1734,1762,'ha...'],...b([1769,1774],[1780,1785],[1787,1796]),[1800,2161,Q+'[7.886 ms]',fr]],
  n8: [...m([503,508]),[508,524,'...'],[524,552,'_all...'],...b([552,559],[568,569],[593,594]),...m([615,624]),[625,643,'_...'],...b([643,650],[656,658],[675,676]),...m([695,703]),[704,719,'...'],...b([719,724],[731,732],[746,747]),[765,1297,F+'rate_limiter, op_id = 1217 [11.478 ms]',T],...m([1298,1303]),[1304,1320,'...'],...b([1320,1327],[1351,1352]),[1368,1734,F+'rate_limiter, op_id = 1251 [7.897 ms]'],...m([1734,1741]),[1742,1757,'...'],...b([1757,1764],[1771,1772],[1783,1784]),[1803,2161,F+'rate_limiter, op_id = 1285 [7.870 ms]',fr]],
  n9: [[524,552,'all_...'],...b([552,559],[644,648],[719,724],[1320,1327],[1757,1764]),[628,644,'...'],[704,719,'...'],[1304,1320,'...'],[1742,1757,'...']],
  n10: [[523,549,'c1...'],...b([549,559],[642,648],[718,724],[1318,1325],[1755,1764]),[628,642,'...'],[704,718,'...'],[1304,1318,'...'],[1742,1755,'...']],
  n11: [[531,549,'n...'],...b([555,556],[647,648],[723,724],[1323,1324],[1760,1762]),[630,644,'...'],[706,720,'...'],[1307,1320,'...'],...m([1746,1756])],
  api: [[370,437,'cudaStrea...','green'+fl],...[[465,470],[473,488],[503,505],[511,529],[532,545],[549,553],[560,567],[597,605],[616,618],[620,643],[648,653],[661,669],[678,683],[695,697],[699,722],[724,730],[734,742],[750,757],[1297,1321],[1324,1340],[1352,1360],[1736,1759],[1762,1769],[1772,1780],[1788,1795]].map(([x,y])=>[x,y,'','api']),[575,580,'','api-b'],[666,668,'','api-b'],[740,742,'','api-b'],[1340,1344,'','api-b'],[1778,1780,'','api-b'],[765,1294,'cudaEventSynchronize','cyan'],[1371,1734,'cudaEventSynchronize','green'],[1803,2161,'cudaEventSynchronize','green'+fr]],
  os2: [[370,2161,'pthread_cond_wait','cream'+fl+fr]]
};
document.querySelectorAll('[data-lanes]').forEach(stack => {
  stack.dataset.lanes.split(' ').forEach(name => {
    const lane = document.createElement('div');
    lane.className = 'lane';
    LANES[name].forEach(([x, y, text, cls = '']) => put(lane, (text ? 'ev ' : 'blk ') + cls, x, y, text));
    stack.appendChild(lane);
  });
});
// Ruler: one label per 2 ms, a long tick per 1 ms, a short tick per 0.25 ms.
const at = ms => 456.5 + (ms - 836) * 46.06;
const ruler = document.getElementById('ruler'), strip = document.getElementById('strip');
for (let ms = 834; ms <= 872; ms += 2) if (ms !== 838) put(ruler, 'tick-lbl', at(ms), null, '+' + ms + 'ms');
put(ruler, 'time-tip', 543, null, '837.87ms');
const hi = document.createElement('b');
hi.style.left = pct(765 - START); hi.style.width = pct(529);
strip.appendChild(hi);
for (let q = 834.25; q < 873; q += .25) {
  const i = document.createElement('i');
  if (q % 1 === 0) i.className = 'major';
  i.style.left = pct(at(q) - START);
  strip.appendChild(i);
}
put(document.getElementById('hw'), 'kern-bar', 643, 2161);
// Thread activity samples and call-stack segments.
const thr = document.getElementById('thr');
[430,497,560,624,687,750,840,934,1028,1125,1219,1308,1371,1466,1559,1656,1745,1809,1906,1999,2093].forEach(x => put(thr, 'smp', x));
[[465,470],[473,480],[480,488],[503,505],[511,524],[527,529],[531,536],[534,541],[540,547],[550,552],[563,564],[575,577],[598,604],[616,618],[621,627],[625,634],[633,643],[652,653],[661,668],[679,683],[695,697],[699,707],[706,719],[724,729],[735,742],[751,757],[765,767],[1297,1304],[1303,1311],[1310,1319],[1328,1329],[1335,1342],[1353,1360],[1371,1373],[1737,1742],[1744,1750],[1750,1757],[1766,1767],[1773,1780],[1788,1795],[1803,1805]].forEach(([x, y]) => put(thr, 'seg', x, y));
put(document.getElementById('hw'), 'fleck short g gt', 433);
put(document.getElementById('osr'), 'fleck long', 459);
document.querySelectorAll('[data-lanes="nccl gemm"], [data-lanes="gemm"]').forEach(s => put(s, 'fleck long g', 433));
// Selection, hover line and hand-placed notes: [left, centre y, text, class].
const over = document.getElementById('over');
put(over, 'band', 765, 1294); put(over, 'cursor-line', 764); put(over, 'hover-line', 542);
[[709,162,'f0 f1 f2 CPU没有wait，一口气unshard 3个fsdp module，所以3个AG之间没有bubble',''],
 [1429,159,'CPU wait 导致的bubble','go'],[641,204,'fc0 AG',''],[986,204,'f1 AG',''],[1307,205,'f2 AG',''],[1706,204,'fc3 AG',''],
 [768,335,'fc3的unshard从Queue中获取的是fc0 reshard event，需要等待fc0 结束','tight'],
 [527,502,'fc0','deep tight'],[626,501,'fc1','deep tight'],[706,492,'fc2','deep tight'],
 [1296,744,'fc3 unshard',''],[839,767,'fc3 unshard前CPU等待的时间','deep']
].forEach(([x, y, t, c]) => { put(over, 'note ' + c, x, null, t).style.top = (y - 109) + 'px'; });
</script>
</body>
</html>
